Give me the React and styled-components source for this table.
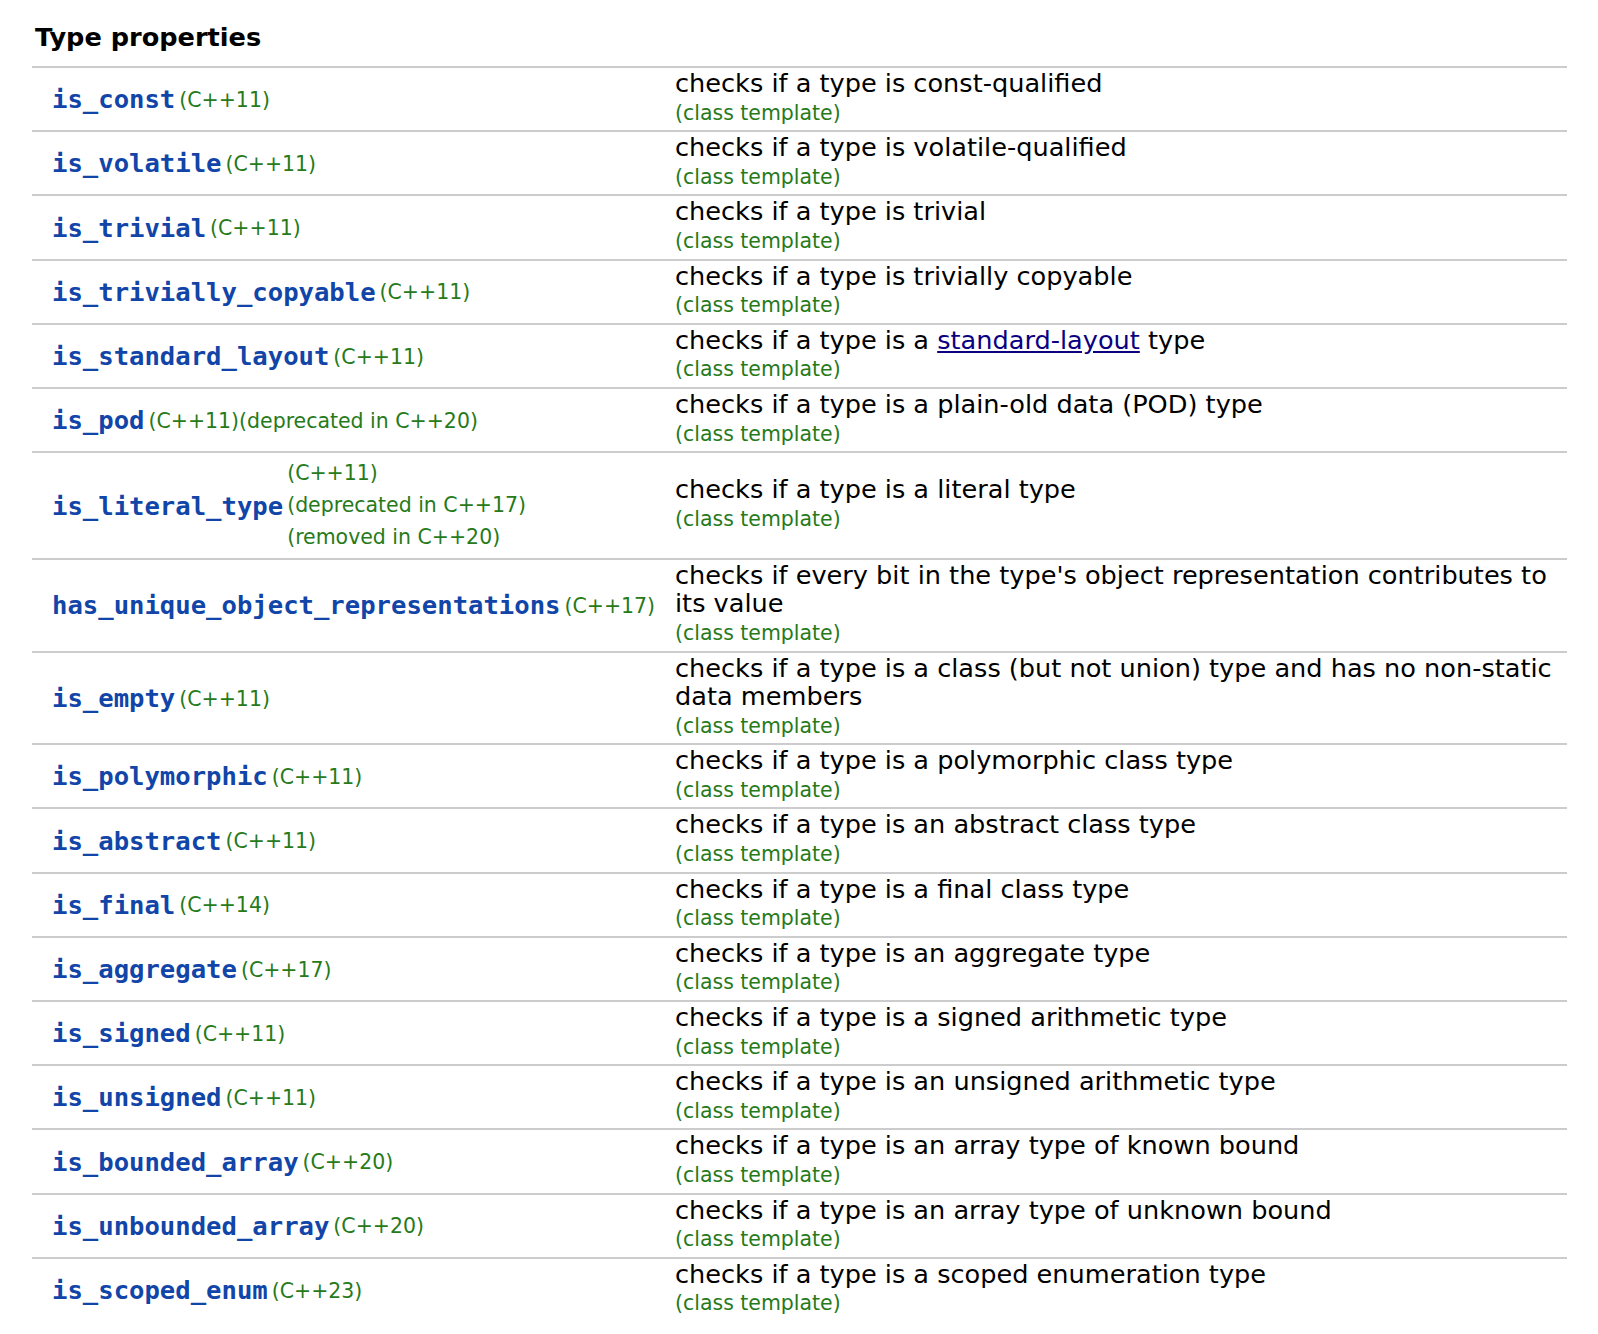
import * as React from 'react';
import styled, { createGlobalStyle } from 'styled-components';

const GlobalStyle = createGlobalStyle`
  html, body {
    margin: 0;
    padding: 0;
    background: #ffffff;
  }
  body {
    font-family: "DejaVu Sans", "Liberation Sans", sans-serif;
    font-size: 25.6px;
    color: #000000;
  }
`;

const Page = styled.div`
  width: 1535px;
  margin-left: 32px;
  overflow: hidden;
`;

// bottom of the previous section's last row, scrolled mostly out of view
const Tail = styled.div`
  height: 2px;
  overflow: hidden;
  padding-left: 643px;
`;

const Heading = styled.div`
  font-weight: bold;
  font-size: 25.6px;
  line-height: 28.5px;
  padding: 20.5px 0 15px 3px;
`;

const Row = styled.div`
  display: grid;
  grid-template-columns: 643px 1fr;
  align-items: center;
  border-top: 2px solid #cccccc;
  padding: 1px 0;
`;

const Member = styled.div`
  display: flex;
  align-items: center;
  padding-left: 20px;
`;

const Name = styled.a`
  font-family: "DejaVu Sans Mono", "Liberation Mono", monospace;
  font-weight: bold;
  font-size: 25.6px;
  color: #1145a8;
  text-decoration: none;
  white-space: nowrap;
`;

const Marks = styled.div`
  margin-left: 4px;
  padding: ${(p) => (p.$stacked ? '4px 0 3.5px' : '3px 0 0 0')};
  display: flex;
  flex-direction: column;
`;

const Mark = styled.span`
  display: block;
  font-size: 20.48px;
  line-height: 31.7px;
  color: #267a1a;
  white-space: nowrap;
  margin-top: ${(p) => p.$offset || 0};
`;

const Desc = styled.div`
  line-height: 28.5px;
  font-size: 25.6px;
`;

const Link = styled.a`
  color: #0b0080;
  text-decoration: underline;
`;

const rows = [
  { name: 'is_const', marks: ['(C++11)'], desc: 'checks if a type is const-qualified' },
  { name: 'is_volatile', marks: ['(C++11)'], desc: 'checks if a type is volatile-qualified' },
  { name: 'is_trivial', marks: ['(C++11)'], desc: 'checks if a type is trivial' },
  { name: 'is_trivially_copyable', marks: ['(C++11)'], desc: 'checks if a type is trivially copyable' },
  {
    name: 'is_standard_layout',
    marks: ['(C++11)'],
    desc: (
      <>
        checks if a type is a <Link href="#standard-layout">standard-layout</Link> type
      </>
    ),
  },
  { name: 'is_pod', marks: ['(C++11)(deprecated in C++20)'], desc: 'checks if a type is a plain-old data (POD) type' },
  {
    name: 'is_literal_type',
    marks: ['(C++11)', '(deprecated in C++17)', '(removed in C++20)'],
    desc: 'checks if a type is a literal type',
  },
  {
    name: 'has_unique_object_representations',
    marks: ['(C++17)'],
    desc: "checks if every bit in the type's object representation contributes to its value",
  },
  {
    name: 'is_empty',
    marks: ['(C++11)'],
    desc: 'checks if a type is a class (but not union) type and has no non-static data members',
  },
  { name: 'is_polymorphic', marks: ['(C++11)'], desc: 'checks if a type is a polymorphic class type' },
  { name: 'is_abstract', marks: ['(C++11)'], desc: 'checks if a type is an abstract class type' },
  { name: 'is_final', marks: ['(C++14)'], desc: 'checks if a type is a final class type' },
  { name: 'is_aggregate', marks: ['(C++17)'], desc: 'checks if a type is an aggregate type' },
  { name: 'is_signed', marks: ['(C++11)'], desc: 'checks if a type is a signed arithmetic type' },
  { name: 'is_unsigned', marks: ['(C++11)'], desc: 'checks if a type is an unsigned arithmetic type' },
  { name: 'is_bounded_array', marks: ['(C++20)'], desc: 'checks if a type is an array type of known bound' },
  { name: 'is_unbounded_array', marks: ['(C++20)'], desc: 'checks if a type is an array type of unknown bound' },
  { name: 'is_scoped_enum', marks: ['(C++23)'], desc: 'checks if a type is a scoped enumeration type' },
];

function TraitRow({ name, marks, desc }) {
  return (
    <Row>
      <Member>
        <Name href={`#${name}`}>{name}</Name>
        <Marks $stacked={marks.length > 1}>
          {marks.map((m) => (
            <Mark key={m}>{m}</Mark>
          ))}
        </Marks>
      </Member>
      <Desc>
        {desc}
        <Mark>(class template)</Mark>
      </Desc>
    </Row>
  );
}

export default function App() {
  return (
    <>
      <GlobalStyle />
      <Page>
        <Tail>
          <Mark $offset="-26px">(class template)</Mark>
        </Tail>
        <Heading>Type properties</Heading>
        {rows.map((r) => (
          <TraitRow key={r.name} {...r} />
        ))}
      </Page>
    </>
  );
}
